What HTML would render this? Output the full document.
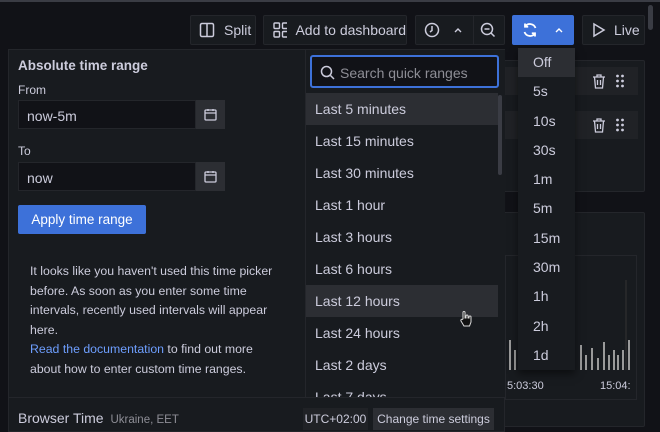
<!DOCTYPE html><html><head><style>
*{box-sizing:border-box;margin:0;padding:0}
body{width:660px;height:432px;overflow:hidden;background:#111217;font-family:"Liberation Sans",sans-serif;color:#ccccdc;position:relative;font-size:13px}
.a{position:absolute;white-space:nowrap}
.btn{position:absolute;top:15px;height:30px;background:#181b1f;border:1px solid #24262b;border-radius:2px;display:flex;align-items:center;font-size:14px;color:#ccccdc;white-space:nowrap}
.list div{height:32px;line-height:32px;padding-left:9px;font-size:14px;color:#ccccdc}
.hl{background:#2c2e33}
.rf div{height:29.3px;line-height:29.3px;padding-left:15px;font-size:14px}
svg{display:block}
</style></head><body>
<div class="a" style="left:0;top:0;width:660px;height:2px;background:#3a3c44"></div>
<div class="a" style="left:500px;top:60px;width:145px;height:132px;background:#181b1f;border:1px solid #24262b;border-radius:2px"></div>
<div class="a" style="left:505px;top:67px;width:133px;height:28px;background:#202226"></div>
<div class="a" style="left:505px;top:111px;width:133px;height:28px;background:#202226"></div>
<div class="a" style="left:500px;top:212px;width:145px;height:215px;background:#181b1f;border:1px solid #24262b;border-radius:2px"></div>
<div class="a" style="left:505px;top:255px;width:132px;height:145px;border:1px solid #24262b"></div>
<div class="a" style="left:507px;top:380px;font-size:11px;color:#ccccdc">5:03:30</div>
<div class="a" style="left:600px;top:380px;font-size:11px;color:#ccccdc">15:04:</div>
<svg class="a" style="left:505px;top:280px" width="130" height="100"><g stroke="#9a9a9a" stroke-width="2">
<line x1="5" y1="90" x2="5" y2="60"/><line x1="10" y1="90" x2="10" y2="70"/><line x1="113" y1="90" x2="113" y2="75"/>
<line x1="76" y1="90" x2="76" y2="65"/><line x1="81" y1="90" x2="81" y2="75"/><line x1="87" y1="90" x2="87" y2="68"/><line x1="93" y1="90" x2="93" y2="78"/><line x1="99" y1="90" x2="99" y2="62"/><line x1="104" y1="90" x2="104" y2="75"/><line x1="109" y1="90" x2="109" y2="70"/><line x1="118" y1="90" x2="118" y2="70"/><line x1="124" y1="90" x2="124" y2="60"/>
</g><line x1="121" y1="0" x2="121" y2="90" stroke="#333" /></svg>
<div class="a" style="left:648px;top:5px;width:5px;height:25px;background:#3a3c44;border-radius:3px"></div>
<!-- toolbar -->
<div class="btn" style="left:190px;width:66px;padding-left:8px"><svg width="16" height="16"><rect x="1.5" y="1.5" width="13" height="13" rx="1.5" fill="none" stroke="#ccccdc" stroke-width="1.5"/><line x1="8" y1="2" x2="8" y2="14" stroke="#ccccdc" stroke-width="1.5"/></svg><span style="margin-left:9px">Split</span></div>
<div class="btn" style="left:263px;width:144px;padding-left:9px"><svg width="16" height="16" fill="none" stroke="#ccccdc" stroke-width="1.4"><rect x="1" y="1" width="5.5" height="5.5" rx="1"/><rect x="9.5" y="1" width="5.5" height="5.5" rx="1"/><rect x="1" y="9.5" width="5.5" height="5.5" rx="1"/><rect x="9.5" y="9.5" width="5.5" height="5.5" rx="1"/></svg><span style="margin-left:8px">Add to dashboard</span></div>
<div class="btn" style="left:415px;width:90px"><svg style="margin-left:8px" width="16" height="16" fill="none" stroke="#ccccdc" stroke-width="1.5"><circle cx="8" cy="8" r="6.5"/><path d="M8 4v4.5l-2 1.5"/></svg><svg style="margin-left:14px" width="8" height="6" fill="none" stroke="#ccccdc" stroke-width="1.4"><path d="M1 5l3-3 3 3"/></svg><div style="position:absolute;left:57px;top:0;width:1px;height:28px;background:#24262b"></div><svg style="margin-left:18px" width="16" height="16" fill="none" stroke="#ccccdc" stroke-width="1.5"><circle cx="7" cy="7" r="5.5"/><path d="M4.5 7h5M11 11l3.5 3.5"/></svg></div>
<div class="btn" style="left:512px;width:62px;background:#3d71d9;border-color:#3d71d9"><svg style="margin-left:9px" width="16" height="16" fill="none" stroke="#fff" stroke-width="1.8"><path d="M13.5 6A6 6 0 0 0 3 4.5M2.5 10A6 6 0 0 0 13 11.5"/><path d="M3 1.5v3.2h3.2M13 14.5v-3.2H9.8"/></svg><svg style="margin-left:17px" width="8" height="6" fill="none" stroke="#fff" stroke-width="1.4"><path d="M1 5l3-3 3 3"/></svg></div>
<div class="btn" style="left:582px;width:63px;padding-left:9px"><svg width="14" height="16" fill="none" stroke="#ccccdc" stroke-width="1.5"><path d="M2 2l10 6-10 6z"/></svg><span style="margin-left:8px">Live</span></div>
<!-- picker -->
<div class="a" style="left:8px;top:49px;width:497px;height:383px;background:#181b1f;border:1px solid #24262b"></div>
<div class="a" style="left:18px;top:58px;font-size:13.5px;font-weight:bold;color:#ccccdc">Absolute time range</div>
<div class="a" style="left:18px;top:83px;font-size:12px">From</div>
<div class="a" style="left:18px;top:100px;width:178px;height:29px;background:#111217;border:1px solid #24262b;padding:7px 0 0 8px;font-size:14px">now-5m</div>
<div class="a" style="left:196px;top:100px;width:29px;height:29px;background:#2c2e33"></div>
<div class="a" style="left:18px;top:144px;font-size:12px">To</div>
<div class="a" style="left:18px;top:162px;width:178px;height:29px;background:#111217;border:1px solid #24262b;padding:7px 0 0 8px;font-size:14px">now</div>
<div class="a" style="left:196px;top:162px;width:29px;height:29px;background:#2c2e33"></div>
<svg class="a" style="left:204px;top:108px" width="13" height="13" fill="none" stroke="#ccccdc" stroke-width="1.3"><rect x="1" y="2" width="11" height="10" rx="1"/><path d="M1 5h11M4 1v2M9 1v2"/></svg>
<svg class="a" style="left:204px;top:170px" width="13" height="13" fill="none" stroke="#ccccdc" stroke-width="1.3"><rect x="1" y="2" width="11" height="10" rx="1"/><path d="M1 5h11M4 1v2M9 1v2"/></svg>
<div class="a" style="left:18px;top:205px;width:128px;height:29px;background:#3d71d9;border-radius:2px;color:#fff;font-size:13.5px;line-height:29px;text-align:center">Apply time range</div>
<div class="a" style="left:30px;top:262px;width:250px;font-size:12.3px;line-height:19.5px;color:#ccccdc;white-space:normal">It looks like you haven't used this time picker before. As soon as you enter some time intervals, recently used intervals will appear here.<br><span style="color:#6e9fff">Read the documentation</span> to find out more about how to enter custom time ranges.</div>
<div class="a" style="left:305px;top:50px;width:200px;height:347px;background:#181b1f;overflow:hidden;border-left:1px solid #24262b">
 <div class="a" style="left:4px;top:5px;width:189px;height:33px;border:2px solid #3d71d9;border-radius:3px;background:#111217"></div>
 <svg class="a" style="left:14px;top:15px" width="15" height="15" fill="none" stroke="#ccccdc" stroke-width="1.5"><circle cx="6.5" cy="6.5" r="5"/><path d="M10.5 10.5l3.5 3.5"/></svg>
 <div class="a" style="left:34px;top:15px;font-size:14px;color:#8e8e96">Search quick ranges</div>
 <div class="list a" style="left:0;top:43px;width:192px">
 <div class="hl">Last 5 minutes</div><div>Last 15 minutes</div><div>Last 30 minutes</div><div>Last 1 hour</div><div>Last 3 hours</div><div>Last 6 hours</div><div class="hl">Last 12 hours</div><div>Last 24 hours</div><div>Last 2 days</div><div>Last 7 days</div></div>
 <div class="a" style="left:192px;top:45px;width:4px;height:80px;background:#3a3c44;border-radius:2px"></div>
</div>
<div class="a" style="left:9px;top:397px;width:495px;height:1px;background:#24262b"></div>
<div class="a" style="left:18px;top:410px;font-size:14px">Browser Time <span style="font-size:11.5px;color:#8e8e96;margin-left:3px">Ukraine, EET</span></div>
<div class="a" style="left:303px;top:408px;width:65px;height:22px;background:#202226;font-size:12px;line-height:22px;text-align:center">UTC+02:00</div>
<div class="a" style="left:373px;top:408px;width:121px;height:22px;background:#2c2e33;font-size:12px;line-height:22px;text-align:center">Change time settings</div>
<svg class="a" style="left:458px;top:310px" width="16" height="18"><path d="M5 9V2.5a1 1 0 0 1 2 0V8h1V6a1 1 0 0 1 2 0v2h1V7a1 1 0 0 1 2 0v5l-1.5 4H6L3 11a1 1 0 0 1 2-1.2" fill="#111" stroke="#ddd" stroke-width="1"/></svg>
<div class="rf a" style="left:518px;top:48px;width:57px;height:322px;background:#181b1f;box-shadow:0 4px 8px rgba(0,0,0,.5)">
<div class="hl">Off</div><div>5s</div><div>10s</div><div>30s</div><div>1m</div><div>5m</div><div>15m</div><div>30m</div><div>1h</div><div>2h</div><div>1d</div></div>
<svg class="a" style="left:592px;top:74px" width="14" height="15" fill="none" stroke="#ccccdc" stroke-width="1.3"><path d="M1 3h12M5 3V1h4v2M2.5 3l1 11h7l1-11M5.5 6v5M8.5 6v5"/></svg>
<svg class="a" style="left:592px;top:118px" width="14" height="15" fill="none" stroke="#ccccdc" stroke-width="1.3"><path d="M1 3h12M5 3V1h4v2M2.5 3l1 11h7l1-11M5.5 6v5M8.5 6v5"/></svg>
<svg class="a" style="left:616px;top:74px" width="8" height="14" fill="#ccccdc"><circle cx="1.5" cy="2" r="1.4"/><circle cx="6.5" cy="2" r="1.4"/><circle cx="1.5" cy="7" r="1.4"/><circle cx="6.5" cy="7" r="1.4"/><circle cx="1.5" cy="12" r="1.4"/><circle cx="6.5" cy="12" r="1.4"/></svg>
<svg class="a" style="left:616px;top:118px" width="8" height="14" fill="#ccccdc"><circle cx="1.5" cy="2" r="1.4"/><circle cx="6.5" cy="2" r="1.4"/><circle cx="1.5" cy="7" r="1.4"/><circle cx="6.5" cy="7" r="1.4"/><circle cx="1.5" cy="12" r="1.4"/><circle cx="6.5" cy="12" r="1.4"/></svg>
</body></html>
